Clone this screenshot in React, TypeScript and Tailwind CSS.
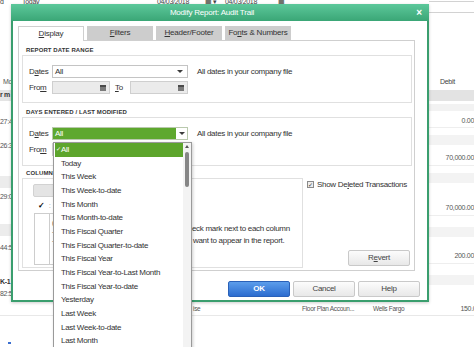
import React from "react";

const options = [
  "All",
  "Today",
  "This Week",
  "This Week-to-date",
  "This Month",
  "This Month-to-date",
  "This Fiscal Quarter",
  "This Fiscal Quarter-to-date",
  "This Fiscal Year",
  "This Fiscal Year-to-Last Month",
  "This Fiscal Year-to-date",
  "Yesterday",
  "Last Week",
  "Last Week-to-date",
  "Last Month",
  "Last Month-to-date",
];

const Arrow = () => (
  <span className="w-0 h-0 border-x-[3px] border-t-[3px] border-x-transparent border-t-[#3c3c3c]" />
);

const Calendar = () => (
  <span className="ml-auto mr-[3px] w-[6px] h-[6px] bg-[#7a7a7a] border-t-2 border-[#4a4a4a]" />
);

const DateInput = () => (
  <div className="flex items-center w-[58px] h-[13px] bg-[#ebebeb] border border-[#cfcfcf]">
    <Calendar />
  </div>
);

const GroupLabel = ({ text, mt }: { text: string; mt: string }) => (
  <div className={`${mt} ml-[7px] h-[9px] leading-[9px] text-[6px] font-bold text-[#333] tracking-[0.1px]`}>
    {text}
  </div>
);

const Label = ({ before, u, after }: { before: string; u: string; after: string }) => (
  <span className="w-[29px] pl-[6px] text-[#333]">
    {before}
    <span className="underline">{u}</span>
    {after}
  </span>
);

const Button = ({ children, primary }: { children: React.ReactNode; primary?: boolean }) => (
  <div
    className={
      primary
        ? "w-[62px] h-[16px] flex items-center justify-center rounded-[2px] border border-[#2a61b8] bg-linear-to-b from-[#5c9deb] to-[#2c6ccf] text-white font-bold"
        : "w-[62px] h-[16px] flex items-center justify-center rounded-[2px] border border-[#c9c9c9] bg-linear-to-b from-[#fcfcfc] to-[#e8e8e8] text-[#444]"
    }
  >
    {children}
  </div>
);

const Row = ({ h, children, className = "" }: { h: string; children?: React.ReactNode; className?: string }) => (
  <div className={`${h} flex items-center whitespace-nowrap ${className}`}>{children}</div>
);

export default function App() {
  return (
    <div className="relative w-[474px] h-[347px] overflow-hidden bg-white font-['Liberation_Sans',Arial,sans-serif] text-[8px] tracking-[-0.3px]">
      {/* report window behind the dialog */}
      <div className="flex h-[13px] text-[7px] text-[#444]">
        <div className="flex w-[429px] -mt-[2px] leading-[8px] whitespace-nowrap">
          <span className="w-[22px]">d</span>
          <span className="w-[135px]">Today</span>
          <span className="w-[48px]">04/03/2018</span>
          <span className="w-[20px]">▦ ▾</span>
          <span className="w-[53px]">04/03/2018</span>
          <span>▦</span>
        </div>
        <div className="flex-1 h-[12px] mt-[1px] border-y border-[#d2d2d2]" />
      </div>

      <div className="flex h-[290px] text-[7px] text-[#555]">
        <div className="w-[11px] flex flex-col">
          <Row h="h-[62px]" />
          <Row h="h-[15px]" className="pl-[3px]">Mo</Row>
          <Row h="h-[11px]" className="bg-[#e4e4e4] font-bold text-[#333]">r m</Row>
          <Row h="h-[14px]" />
          <Row h="h-[14px]">27:4</Row>
          <Row h="h-[10px]" />
          <Row h="h-[14px]">26:3</Row>
          <Row h="h-[23px]" />
          <Row h="h-[12px]" className="bg-[#ececec]" />
          <Row h="h-[2px]" />
          <Row h="h-[14px]">29:0</Row>
          <Row h="h-[20px]" />
          <Row h="h-[12px]" className="bg-[#ececec]" />
          <Row h="h-[5px]" />
          <Row h="h-[14px]">44:5</Row>
          <Row h="h-[21px]" />
          <Row h="h-[12px]" className="font-bold text-[#333]">K-1</Row>
          <Row h="h-[12px]">82:5</Row>
        </div>
        <div className="w-[418px]" />
        <div className="flex-1 flex flex-col">
          <Row h="h-[62px]" />
          <Row h="h-[15px]" className="pl-[17px] text-[#444]">Debit</Row>
          <Row h="h-[11px]" className="bg-[#e3e3e3]" />
          <Row h="h-[3px]" />
          <Row h="h-[7px]" className="bg-[#f2f2f2]" />
          <Row h="h-[4px]" />
          <Row h="h-[13px]" className="border-b border-[#eee]">
            <span className="w-[51px] shrink-0 text-right">0.00</span>
          </Row>
          <Row h="h-[7px]" />
          <Row h="h-[10px]" className="bg-[#f3f3f3]" />
          <Row h="h-[7px]" />
          <Row h="h-[14px]" className="border-b border-[#eee]">
            <span className="w-[51px] shrink-0 text-right">70,000.00</span>
          </Row>
          <Row h="h-[7px]" />
          <Row h="h-[10px]" className="bg-[#f3f3f3]" />
          <Row h="h-[19px]" />
          <Row h="h-[14px]" className="border-b border-[#eee]">
            <span className="w-[51px] shrink-0 text-right">70,000.00</span>
          </Row>
          <Row h="h-[11px]" />
          <Row h="h-[10px]" className="bg-[#f3f3f3]" />
          <Row h="h-[13px]" />
          <Row h="h-[14px]" className="border-b border-[#eee]">
            <span className="w-[51px] shrink-0 text-right">200.00</span>
          </Row>
          <Row h="h-[11px]" />
          <Row h="h-[10px]" className="bg-[#f3f3f3]" />
        </div>
      </div>

      <Row h="h-[13px]" className="text-[6.5px] text-[#555] border-b border-[#e8e8e8]">
        <span className="w-[193px] shrink-0" />
        <span className="w-[109px] shrink-0">ise</span>
        <span className="w-[71px] shrink-0">Floor Plan Accoun...</span>
        <span className="w-[56px] shrink-0">Wells Fargo</span>
        <span className="w-[51px] shrink-0 text-right text-[7px]">150.00</span>
      </Row>
      <div className="ml-[8px] mt-[26px] w-[3px] h-[2px] bg-[#3b6fd0]" />

      {/* Modify Report dialog */}
      <div className="absolute left-[11px] top-[4px] w-[418px] h-[298px] flex flex-col bg-white border-x-2 border-b-2 border-[#3a9e6e] shadow-[0_1px_3px_rgba(0,0,0,0.2)]">
        <div className="-mx-[2px] h-[17px] flex items-center bg-linear-to-b from-[#5cc89b] to-[#3aa676] text-white">
          <div className="flex-1 text-center pl-[4px] text-[8px] tracking-[-0.2px]">Modify Report: Audit Trail</div>
          <div className="w-[20px] text-center text-[10px] font-bold">×</div>
        </div>

        <div className="mt-[5px] ml-[5px] flex gap-[3px] h-[14px] text-[#333] tracking-[-0.2px]">
          <div className="relative z-10 w-[66px] h-[15px] flex items-center justify-center bg-white border-x border-t border-[#cfcfcf]">
            <span className="underline">D</span>isplay
          </div>
          <div className="w-[66px] flex items-center justify-center bg-[#cdcdcd]">
            <span className="underline">F</span>ilters
          </div>
          <div className="w-[66px] flex items-center justify-center bg-[#cdcdcd]">
            <span className="underline">H</span>eader/Footer
          </div>
          <div className="w-[66px] flex items-center justify-center bg-[#cdcdcd]">
            Fo<span className="underline">n</span>ts &amp; Numbers
          </div>
        </div>

        <div className="ml-[5px] w-[397px] h-[231px] flex flex-col border border-[#cfcfcf] text-[#333]">
          <GroupLabel text="REPORT DATE RANGE" mt="mt-[5px]" />
          <div className="ml-[3px] w-[390px] h-[48px] border border-[#e0e0e0] flex flex-col">
            <div className="mt-[9px] h-[13px] flex items-center">
              <Label before="D" u="a" after="tes" />
              <div className="flex items-center w-[136px] h-[13px] border border-[#c4c4c4] pl-[2px]">
                <span>All</span>
                <span className="ml-auto mr-[4px] flex">
                  <Arrow />
                </span>
              </div>
              <span className="ml-[9px]">All dates in your company file</span>
            </div>
            <div className="mt-[3px] h-[13px] flex items-center">
              <Label before="Fro" u="m" after="" />
              <DateInput />
              <span className="w-[20px] pl-[5px]">
                <span className="underline">T</span>o
              </span>
              <DateInput />
            </div>
          </div>

          <GroupLabel text="DAYS ENTERED / LAST MODIFIED" mt="mt-[5px]" />
          <div className="ml-[3px] w-[390px] h-[49px] border border-[#e0e0e0] flex flex-col">
            <div className="mt-[9px] h-[13px] flex items-center">
              <Label before="D" u="a" after="tes" />
              <div className="flex w-[136px] h-[13px] border border-[#b9c9ad]">
                <div className="flex-1 bg-[#5ea82e] text-white pl-[2px] leading-[11px]">All</div>
                <div className="w-[11px] flex items-center justify-center">
                  <Arrow />
                </div>
              </div>
              <span className="ml-[9px]">All dates in your company file</span>
            </div>
            <div className="mt-[3px] h-[13px] flex items-center">
              <Label before="Fro" u="m" after="" />
              <DateInput />
            </div>
          </div>

          <GroupLabel text="COLUMNS" mt="mt-[3px]" />
          <div className="ml-[3px] w-[390px] h-[90px] flex">
            <div className="w-[281px] h-full border border-[#e0e0e0] flex">
              <div className="w-[142px] flex flex-col">
                <div className="mt-[5px] ml-[10px] w-[120px] h-[13px] bg-[#e4e4e4] border border-[#d2d2d2] rounded-[2px]" />
                <div className="mt-[4px] ml-[15px] h-[10px] flex items-center gap-[4px] text-black">
                  <span className="font-bold">✓</span>
                  <span className="text-[#aaa]">:</span>
                </div>
                <div className="mt-[2px] ml-[11px] w-[120px] h-[52px] border border-[#cdcdcd] flex">
                  <div className="w-[15px] border-r border-[#cdcdcd]" />
                  <div className="pl-[2px] pt-[4px] flex flex-col leading-[9px] text-[#555]">
                    <span>(</span>
                    <span>-</span>
                    <span>-</span>
                  </div>
                </div>
              </div>
              <div className="pt-[44px] leading-[12px] whitespace-nowrap">
                <div>Put a check mark next to each column</div>
                <div>that you want to appear in the report.</div>
              </div>
            </div>
            <div className="flex-1 flex flex-col">
              <div className="mt-[2px] ml-[4px] h-[9px] flex items-center gap-[3px]">
                <span className="w-[7px] h-[7px] border border-[#8a8a8a] bg-[#ededed] flex items-center justify-center text-[6px] leading-none text-[#333]">
                  ✓
                </span>
                <span>
                  Show De<span className="underline">l</span>eted Transactions
                </span>
              </div>
              <div className="mt-auto mb-[2px] mr-[2px] self-end">
                <Button>
                  R<span className="underline">e</span>vert
                </Button>
              </div>
            </div>
          </div>
        </div>

        <div className="mt-[10px] pr-[7px] flex justify-end gap-[3px]">
          <Button primary>OK</Button>
          <Button>Cancel</Button>
          <Button>Help</Button>
        </div>

        {/* open Dates list */}
        <div className="absolute left-[40px] top-[138px] w-[139px] h-[212px] z-20 flex bg-white border border-[#9a9a9a] shadow-[1px_1px_3px_rgba(0,0,0,0.2)]">
          <div className="flex-1 pl-[1px] flex flex-col text-[#333]">
            {options.map((o, i) => (
              <div
                key={o}
                className={`h-[13.7px] shrink-0 flex items-center whitespace-nowrap ${i === 0 ? "bg-[#5da52c] text-white" : ""}`}
              >
                <span className="w-[6px] text-[6px] pl-[1px]">{i === 0 ? "✓" : ""}</span>
                {o}
              </div>
            ))}
          </div>
          <div className="w-[8px] bg-[#f3f3f3] flex flex-col items-center">
            <span className="mt-[2px] w-0 h-0 border-x-[2.5px] border-b-[3px] border-x-transparent border-b-[#555]" />
            <span className="mt-[4px] w-[4px] h-[35px] rounded-[2px] bg-[#868686]" />
          </div>
        </div>
      </div>
    </div>
  );
}
